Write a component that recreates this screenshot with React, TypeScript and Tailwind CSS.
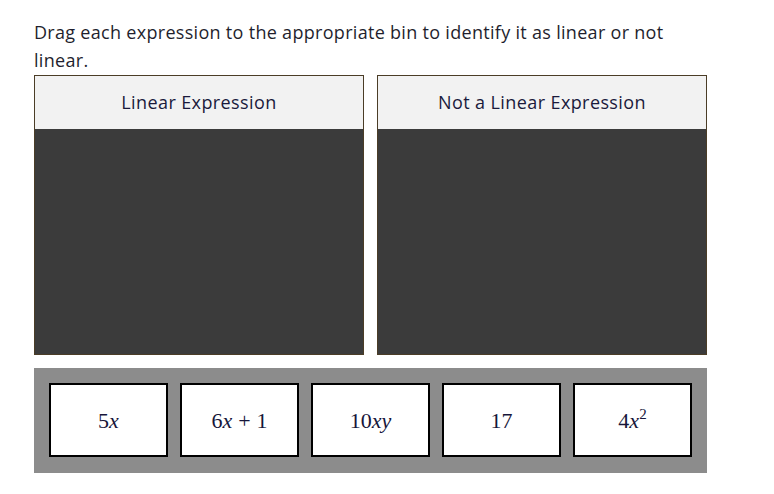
export default function App() {
  const items = [
    { key: "a", node: <>5<i>x</i></> },
    { key: "b", node: <>6<i>x</i><span className="mx-[6px]">+</span>1</> },
    { key: "c", node: <>10<i>xy</i></> },
    { key: "d", node: <>17</> },
    { key: "e", node: <>4<i>x</i><sup className="text-[15px] align-baseline relative -top-[9px]">2</sup></> },
  ];

  return (
    <div
      className="w-[774px] h-[494px] bg-white pl-[34px] pt-[18px] tracking-[0.3px]"
      style={{ fontFamily: '"Open Sans", sans-serif' }}
    >
      {/* Prompt */}
      <p className="w-[650px] text-[18px] leading-[28px] text-[#1f1f2e]">
        Drag each expression to the appropriate bin to identify it as linear or not linear.
      </p>

      {/* Bins */}
      <div className="mt-px flex gap-[13px]">
        {["Linear Expression", "Not a Linear Expression"].map((label) => (
          <div key={label} className="w-[330px] border border-[#4b3d27] flex flex-col">
            <div className="h-[53px] bg-[#f2f2f2] flex items-center justify-center text-[18px] tracking-[0.4px] text-[#1a1a3c]">
              {label}
            </div>
            <div className="h-[225px] bg-[#3b3b3b]" />
          </div>
        ))}
      </div>

      {/* Tray */}
      <div className="mt-[13px] w-[673px] h-[105px] bg-[#8c8c8c] px-[15px] pt-[15px] flex gap-[12px] tracking-normal">
        {items.map((it) => (
          <div
            key={it.key}
            className="w-[119px] h-[74px] bg-white border-2 border-black flex items-center justify-center text-[22px] text-[#16163a]"
            style={{ fontFamily: '"Liberation Serif", serif' }}
          >
            <span>{it.node}</span>
          </div>
        ))}
      </div>
    </div>
  );
}
